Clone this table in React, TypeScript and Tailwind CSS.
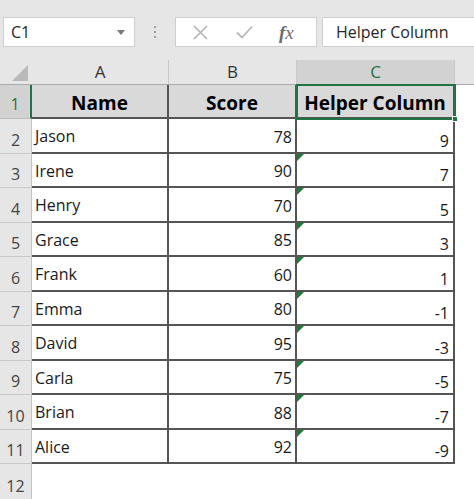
import React from "react";

const rows: [string, number, number][] = [
  ["Jason", 78, 9],
  ["Irene", 90, 7],
  ["Henry", 70, 5],
  ["Grace", 85, 3],
  ["Frank", 60, 1],
  ["Emma", 80, -1],
  ["David", 95, -3],
  ["Carla", 75, -5],
  ["Brian", 88, -7],
  ["Alice", 92, -9],
];

const font = { fontFamily: "'Open Sans', Lato, sans-serif" };

export default function App() {
  return (
    <div className="w-[474px] h-[499px] overflow-hidden bg-white relative" style={font}>
      {/* Toolbar */}
      <div className="h-[60px] bg-[#e6e6e6] flex items-start pt-[17px]">
        <div className="ml-[3px] w-[132px] h-[30px] bg-white border border-[#cfcfcf] flex items-center justify-between pl-[7px] pr-[9px]">
          <span className="text-[16px] text-[#262626]">C1</span>
          <svg width="8" height="5" viewBox="0 0 8 5">
            <path d="M0 0 L8 0 L4 5 Z" fill="#777" />
          </svg>
        </div>
        <div className="w-[40px] h-[30px] flex flex-col items-center justify-center gap-[3px]">
          <div className="w-[2px] h-[2px] bg-[#a0a0a0]" />
          <div className="w-[2px] h-[2px] bg-[#a0a0a0]" />
          <div className="w-[2px] h-[2px] bg-[#a0a0a0]" />
        </div>
        <div className="w-[142px] h-[30px] bg-white border border-[#cfcfcf] flex items-center">
          <svg className="ml-[17px]" width="15" height="15" viewBox="0 0 15 15">
            <path d="M1 1 L14 14 M14 1 L1 14" stroke="#b3b3b3" strokeWidth="1.6" fill="none" />
          </svg>
          <svg className="ml-[28px]" width="17" height="14" viewBox="0 0 17 14">
            <path d="M1 7.5 L6 12.5 L16 1.5" stroke="#b8b8b8" strokeWidth="1.8" fill="none" />
          </svg>
          <span
            className="ml-[26px] text-[19px] italic text-[#6b6b6b] leading-none"
            style={{ fontFamily: "'Liberation Serif', serif" }}
          >
            <span className="font-bold">f</span>x
          </span>
        </div>
        <div className="ml-[5px] flex-1 h-[30px] bg-white border border-[#cfcfcf] border-r-0 flex items-center pl-[13px]">
          <span className="text-[16px] text-[#262626]">Helper Column</span>
        </div>
      </div>

      {/* Column header row */}
      <div className="flex h-[25px] bg-[#e6e6e6] border-b border-[#ababab]">
        <div className="w-[32px] h-full relative">
          <svg className="absolute left-[12px] top-[5px]" width="16" height="16" viewBox="0 0 16 16">
            <path d="M16 0 L16 16 L0 16 Z" fill="#b9b9b9" />
          </svg>
        </div>
        <div className="w-[137px] flex items-center justify-center text-[17px] text-[#333] border-r border-[#c9c9c9]">A</div>
        <div className="w-[128px] flex items-center justify-center text-[17px] text-[#333] border-r border-[#c9c9c9]">B</div>
        <div className="w-[158px] flex items-center justify-center text-[17px] text-[#217346] bg-[#d2d2d2] border-r border-[#c9c9c9]">C</div>
        <div className="flex-1" />
      </div>

      {/* Row 1 */}
      <div className="flex h-[34px]">
        <div className="w-[32px] bg-[#d2d2d2] border-r-2 border-[#217346] border-b border-b-[#bdbdbd] flex items-end justify-center pb-[2px] text-[16px] text-[#217346]">
          1
        </div>
        <div className="w-[137px] bg-[#d9d9d9] border-r-2 border-b-2 border-[#555] flex items-center justify-center text-[19px] font-bold text-black pt-[4px]">
          Name
        </div>
        <div className="w-[128px] bg-[#d9d9d9] border-r-2 border-b-2 border-[#555] flex items-center justify-center text-[19px] font-bold text-black pt-[4px]">
          Score
        </div>
        <div className="w-[158px] bg-[#d9d9d9] border-r-2 border-b-2 border-[#555] flex items-center justify-center text-[19px] font-bold text-black pt-[4px]">
          Helper Column
        </div>
        <div className="flex-1" />
      </div>

      {/* Data rows */}
      {rows.map(([name, score, helper], i) => (
        <div key={name} className={`flex ${i % 2 === 0 ? "h-[35px]" : "h-[34px]"}`}>
          <div className="w-[32px] bg-[#e6e6e6] border-r border-[#c3c3c3] border-b border-b-[#c9c9c9] flex items-end justify-center pb-[1px] text-[16px] text-[#444]">
            {i + 2}
          </div>
          <div className="w-[137px] border-r-2 border-b-2 border-[#555] flex items-center pl-[3px] pt-[1px] text-[16px] text-[#1a1a1a]">
            {name}
          </div>
          <div className="w-[128px] border-r-2 border-b-2 border-[#555] flex items-center justify-end pr-[3px] pt-[2px] text-[16px] text-[#1a1a1a]">
            {score}
          </div>
          <div className="w-[158px] border-r-2 border-b-2 border-[#555] flex items-end justify-end pr-[4px] text-[16px] leading-[22px] text-[#1a1a1a] relative">
            {i > 0 && (
              <svg className="absolute left-0 top-0" width="7" height="7" viewBox="0 0 7 7">
                <path d="M0 0 L7 0 L0 7 Z" fill="#1e7b34" />
              </svg>
            )}
            {helper}
          </div>
          <div className="flex-1" />
        </div>
      ))}

      {/* Row 12 */}
      <div className="flex h-[40px]">
        <div className="w-[32px] bg-[#e6e6e6] border-r border-[#c3c3c3] flex items-start justify-center pt-[10px] text-[16px] text-[#444]">
          12
        </div>
        <div className="flex-1" />
      </div>

      {/* Selection outline on C1 */}
      <div className="absolute left-[296px] top-[84px] w-[160px] h-[36px] border-2 border-[#217346] pointer-events-none" />
      <div className="absolute left-[452px] top-[116px] w-[6px] h-[6px] bg-[#217346] border border-white pointer-events-none" />
    </div>
  );
}
